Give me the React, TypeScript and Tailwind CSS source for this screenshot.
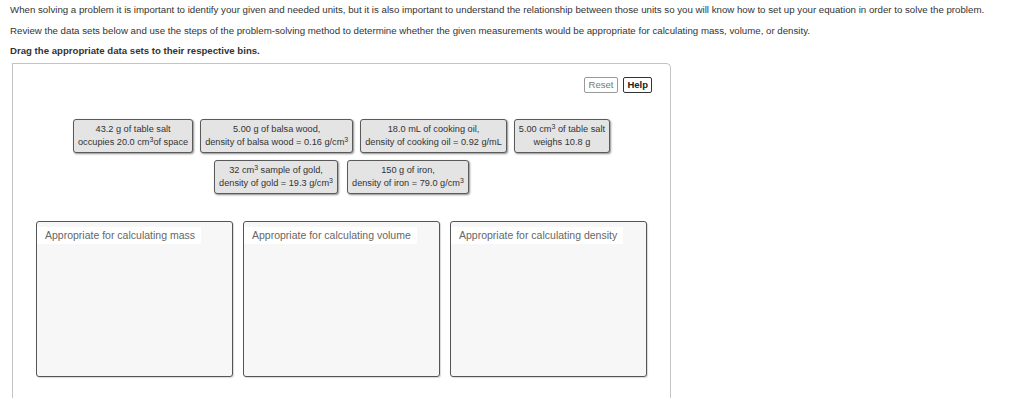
import React from "react";

const tileCls =
  "whitespace-nowrap rounded-[3px] border border-[#5a5a5a] bg-[#e4e4e4] px-[4px] py-[3px] text-center text-[9.2px] leading-[13px] text-[#333] shadow-[1px_1px_2px_rgba(0,0,0,0.45)]";

function Sup({ children }: { children: React.ReactNode }) {
  return <sup className="text-[7px] leading-none">{children}</sup>;
}

function Bin({ label }: { label: string }) {
  return (
    <div className="h-[156px] w-[197px] rounded-[3px] border border-[#555] bg-[#f7f7f7] shadow-[1px_1px_1px_rgba(0,0,0,0.15)]">
      <div className="inline-block bg-white pl-[8px] pr-[6px] pt-[2px] pb-[3px] text-[10.5px] leading-[12px] text-[#666]">
        {label}
      </div>
    </div>
  );
}

export default function App() {
  return (
    <div className="h-[398px] overflow-hidden bg-white pl-[10px] pt-[3px] font-['Liberation_Sans',Arial,sans-serif] text-[#333]">
      <p className="text-[9.7px] leading-[14px]">
        When solving a problem it is important to identify your given and needed units, but it is also important to understand
        the relationship between those units so you will know how to set up your equation in order to solve the problem.
      </p>
      <p className="mt-[7px] text-[9.7px] leading-[14px]">
        Review the data sets below and use the steps of the problem-solving method to determine whether the given measurements
        would be appropriate for calculating mass, volume, or density.
      </p>
      <p className="mt-[6px] text-[9.65px] font-bold leading-[14px]">Drag the appropriate data sets to their respective bins.</p>

      {/* drag area */}
      <div className="ml-[2px] mt-[5px] h-[400px] w-[659px] rounded-tr-[5px] border-l border-r border-t border-[#c4c4c4] pt-[13px]">
        <div className="flex justify-end gap-[5px] pr-[18px]">
          <button className="rounded-[2px] border border-[#999] bg-white px-[4px] text-[9.5px] leading-[14px] text-[#777]">
            Reset
          </button>
          <button className="rounded-[2px] border border-[#333] bg-white px-[3px] text-[9.5px] font-bold leading-[14px] text-[#222]">
            Help
          </button>
        </div>

        <div className="mt-[26px] flex flex-col items-center gap-[7px]">
          <div className="flex items-center gap-[7px]">
            <div className={tileCls}>
              43.2 g of table salt
              <br />
              occupies 20.0 cm<Sup>3</Sup>of space
            </div>
            <div className={tileCls}>
              5.00 g of balsa wood,
              <br />
              density of balsa wood = 0.16 g/cm<Sup>3</Sup>
            </div>
            <div className={tileCls}>
              18.0 mL of cooking oil,
              <br />
              density of cooking oil = 0.92 g/mL
            </div>
            <div className={tileCls}>
              5.00 cm<Sup>3</Sup> of table salt
              <br />
              weighs 10.8 g
            </div>
          </div>
          <div className="flex items-center gap-[9px]">
            <div className={tileCls}>
              32 cm<Sup>3</Sup> sample of gold,
              <br />
              density of gold = 19.3 g/cm<Sup>3</Sup>
            </div>
            <div className={tileCls}>
              150 g of iron,
              <br />
              density of iron = 79.0 g/cm<Sup>3</Sup>
            </div>
          </div>
        </div>

        <div className="mt-[27px] flex justify-center gap-[10px]">
          <Bin label="Appropriate for calculating mass" />
          <Bin label="Appropriate for calculating volume" />
          <Bin label="Appropriate for calculating density" />
        </div>
      </div>
    </div>
  );
}
